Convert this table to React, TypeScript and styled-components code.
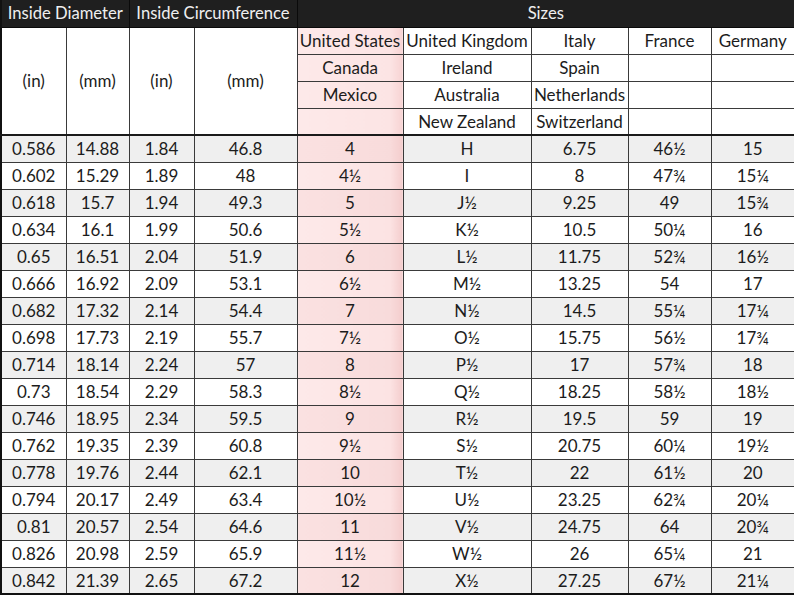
import React from "react";
import styled, { createGlobalStyle } from "styled-components";

const Global = createGlobalStyle`
  html, body { margin: 0; padding: 0; background: #fff; }
  body { font-family: Lato, "Open Sans", sans-serif; }
`;

const Table = styled.table`
  width: 794px;
  table-layout: fixed;
  border-collapse: collapse;
  border: 2px solid #111;
  border-top: 0;
  color: #1c1c1c;
  font-size: 17px;
`;

const HeadRow = styled.tr`
  height: 27px;
  background: #1f1f1f;
`;

const HeadCell = styled.th`
  color: #efefef;
  font-weight: 400;
  font-size: 16.6px;
  padding: 0;
  text-align: center;
  border: 1px solid #0a0a0a;
  border-top: 0;
  white-space: nowrap;
  overflow: hidden;
`;

const SubRow = styled.tr`
  height: 27px;
`;

const UnitCell = styled.td`
  text-align: center;
  padding: 0;
  background: #fff;
  border: 1px solid #3a3a3a;
  border-bottom: 2px solid #1a1a1a;
`;

const CountryCell = styled.td<{ $us?: boolean; $last?: boolean }>`
  text-align: center;
  padding: 0;
  white-space: nowrap;
  overflow: hidden;
  border: 1px solid #3a3a3a;
  ${(p) => (p.$last ? "border-bottom: 2px solid #1a1a1a;" : "")}
  background: ${(p) =>
    p.$us ? "linear-gradient(90deg, #fde9e9 0%, #fce4e4 88%, #f7d3d3 100%)" : "#fff"};
`;

const DataRow = styled.tr<{ $shaded: boolean }>`
  height: 27px;
  background: ${(p) => (p.$shaded ? "#efefef" : "#fff")};
`;

const DataCell = styled.td<{ $us?: boolean; $shaded?: boolean }>`
  text-align: center;
  padding: 0;
  white-space: nowrap;
  border: 1px solid #3a3a3a;
  ${(p) =>
    p.$us
      ? `background: linear-gradient(90deg, ${p.$shaded ? "#fae1e1" : "#fde9e9"} 0%, ${
          p.$shaded ? "#f8dbdb" : "#fce3e3"
        } 88%, #f4cdcd 100%);`
      : ""}
`;

const widths = [65, 63, 65, 103, 106, 128, 97, 83, 84];

const countries: string[][] = [
  ["United States", "United Kingdom", "Italy", "France", "Germany"],
  ["Canada", "Ireland", "Spain", "", ""],
  ["Mexico", "Australia", "Netherlands", "", ""],
  ["", "New Zealand", "Switzerland", "", ""],
];

const rows: string[][] = [
  ["0.586", "14.88", "1.84", "46.8", "4", "H", "6.75", "46½", "15"],
  ["0.602", "15.29", "1.89", "48", "4½", "I", "8", "47¾", "15¼"],
  ["0.618", "15.7", "1.94", "49.3", "5", "J½", "9.25", "49", "15¾"],
  ["0.634", "16.1", "1.99", "50.6", "5½", "K½", "10.5", "50¼", "16"],
  ["0.65", "16.51", "2.04", "51.9", "6", "L½", "11.75", "52¾", "16½"],
  ["0.666", "16.92", "2.09", "53.1", "6½", "M½", "13.25", "54", "17"],
  ["0.682", "17.32", "2.14", "54.4", "7", "N½", "14.5", "55¼", "17¼"],
  ["0.698", "17.73", "2.19", "55.7", "7½", "O½", "15.75", "56½", "17¾"],
  ["0.714", "18.14", "2.24", "57", "8", "P½", "17", "57¾", "18"],
  ["0.73", "18.54", "2.29", "58.3", "8½", "Q½", "18.25", "58½", "18½"],
  ["0.746", "18.95", "2.34", "59.5", "9", "R½", "19.5", "59", "19"],
  ["0.762", "19.35", "2.39", "60.8", "9½", "S½", "20.75", "60¼", "19½"],
  ["0.778", "19.76", "2.44", "62.1", "10", "T½", "22", "61½", "20"],
  ["0.794", "20.17", "2.49", "63.4", "10½", "U½", "23.25", "62¾", "20¼"],
  ["0.81", "20.57", "2.54", "64.6", "11", "V½", "24.75", "64", "20¾"],
  ["0.826", "20.98", "2.59", "65.9", "11½", "W½", "26", "65¼", "21"],
  ["0.842", "21.39", "2.65", "67.2", "12", "X½", "27.25", "67½", "21¼"],
];

export default function App() {
  return (
    <>
      <Global />
      <Table>
        <colgroup>
          {widths.map((w, i) => (
            <col key={i} style={{ width: w }} />
          ))}
        </colgroup>
        <thead>
          <HeadRow>
            <HeadCell colSpan={2}>Inside Diameter</HeadCell>
            <HeadCell colSpan={2}>Inside Circumference</HeadCell>
            <HeadCell colSpan={5}>Sizes</HeadCell>
          </HeadRow>
          {countries.map((c, r) => (
            <SubRow key={r}>
              {r === 0 && (
                <>
                  <UnitCell rowSpan={4}>(in)</UnitCell>
                  <UnitCell rowSpan={4}>(mm)</UnitCell>
                  <UnitCell rowSpan={4}>(in)</UnitCell>
                  <UnitCell rowSpan={4}>(mm)</UnitCell>
                </>
              )}
              {c.map((name, i) => (
                <CountryCell key={i} $us={i === 0} $last={r === 3}>
                  {name}
                </CountryCell>
              ))}
            </SubRow>
          ))}
        </thead>
        <tbody>
          {rows.map((row, r) => (
            <DataRow key={r} $shaded={r % 2 === 0}>
              {row.map((v, i) => (
                <DataCell key={i} $us={i === 4} $shaded={r % 2 === 0}>
                  {v}
                </DataCell>
              ))}
            </DataRow>
          ))}
        </tbody>
      </Table>
    </>
  );
}
